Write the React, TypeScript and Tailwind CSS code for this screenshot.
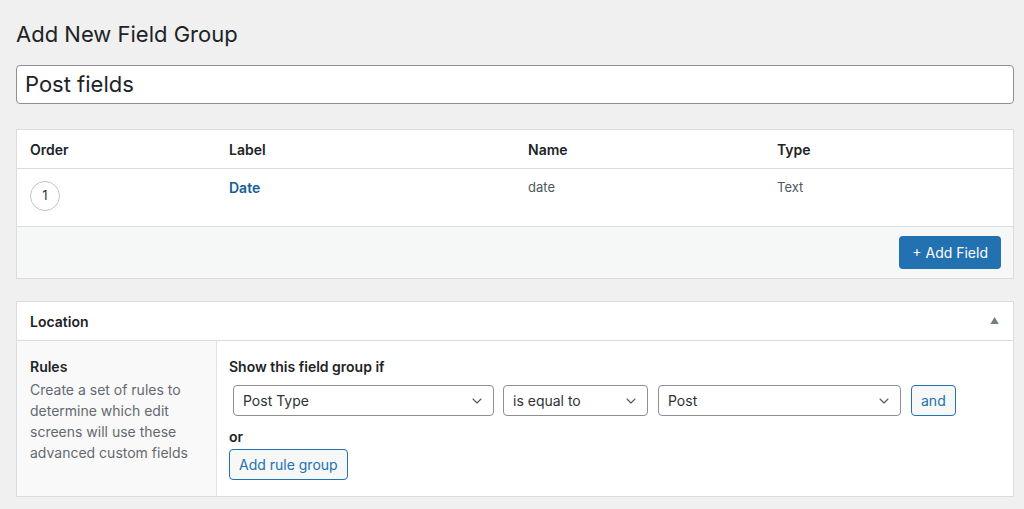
import { ChevronDown } from 'lucide-react';

const font = { fontFamily: 'Inter, "Noto Sans", sans-serif' };

function Select({ value, width }: { value: string; width: string }) {
  return (
    <div className={`${width} h-[31px] flex items-center justify-between border border-[#8c8f94] rounded-[4px] bg-white pl-[9px] pr-[8px] text-[14px] text-[#2c3338]`}>
      <span>{value}</span>
      <ChevronDown size={16} strokeWidth={1.6} className="text-[#50575e]" />
    </div>
  );
}

export default function App() {
  return (
    <div style={font} className="min-h-[509px] bg-[#f0f0f1] pl-4 pr-[10px] pt-[19px] text-[#1d2327]">
      <h1 className="text-[22px] leading-[30px] font-normal">Add New Field Group</h1>

      <div className="mt-4 h-[39px] border border-[#8c8f94] rounded-[4px] bg-white flex items-center px-[8px] text-[22px]">
        Post fields
      </div>

      {/* Fields table */}
      <div className="mt-[25px] border border-[#dcdcde] bg-white">
        <div className="h-[39px] flex items-center text-[14px] font-semibold border-b border-[#dcdcde]">
          <span className="w-[212px] pl-[13px]">Order</span>
          <span className="w-[299px]">Label</span>
          <span className="w-[249px]">Name</span>
          <span>Type</span>
        </div>
        <div className="h-[58px] flex items-start pt-[8px] border-b border-[#dcdcde]">
          <div className="w-[212px] pl-[13px] pt-[4px]">
            <div className="w-[30px] h-[30px] rounded-full border border-[#c3c4c7] flex items-center justify-center text-[13px] text-[#2c3338]">1</div>
          </div>
          <span className="w-[299px] text-[14px] font-semibold text-[#135e96]">Date</span>
          <span className="w-[249px] text-[13px] text-[#50575e] pt-[1px]">date</span>
          <span className="text-[13px] text-[#50575e] pt-[1px]">Text</span>
        </div>
        <div className="h-[51px] bg-[#f6f7f7] flex items-center justify-end pr-[12px]">
          <button className="h-[33px] px-[13px] rounded-[4px] bg-[#2271b1] text-white text-[14px]">+ Add Field</button>
        </div>
      </div>

      {/* Location */}
      <div className="mt-[22px] border border-[#dcdcde] bg-white">
        <div className="h-[39px] flex items-center justify-between px-[13px] border-b border-[#dcdcde]">
          <span className="text-[14px] font-semibold">Location</span>
          <span className="text-[9px] text-[#787c82] pr-[1px]">▲</span>
        </div>
        <div className="flex">
          <div className="w-[200px] shrink-0 bg-[#f9f9f9] border-r border-[#e1e1e1] px-[13px] pt-[16px] pb-[20px]">
            <div className="text-[14px] font-semibold leading-[20px]">Rules</div>
            <p className="text-[14px] leading-[21px] text-[#646970] mt-[2px]">
              Create a set of rules to determine which edit screens will use these advanced custom fields
            </p>
          </div>
          <div className="flex-1 pl-[12px] pt-[16px] pb-[16px]">
            <div className="text-[14px] font-semibold leading-[20px]">Show this field group if</div>
            <div className="mt-[8px] flex items-center pl-[4px]">
              <Select value="Post Type" width="w-[261px]" />
              <div className="w-[9px]" />
              <Select value="is equal to" width="w-[145px]" />
              <div className="w-[10px]" />
              <Select value="Post" width="w-[243px]" />
              <button className="ml-[10px] h-[31px] px-[9px] rounded-[4px] border border-[#2271b1] bg-[#f6f7f7] text-[14px] text-[#2271b1]">and</button>
            </div>
            <div className="mt-[11px] text-[14px] font-semibold leading-[20px]">or</div>
            <button className="mt-[2px] h-[31px] px-[9px] rounded-[4px] border border-[#2271b1] bg-[#f6f7f7] text-[14px] text-[#2271b1]">Add rule group</button>
          </div>
        </div>
      </div>
    </div>
  );
}
